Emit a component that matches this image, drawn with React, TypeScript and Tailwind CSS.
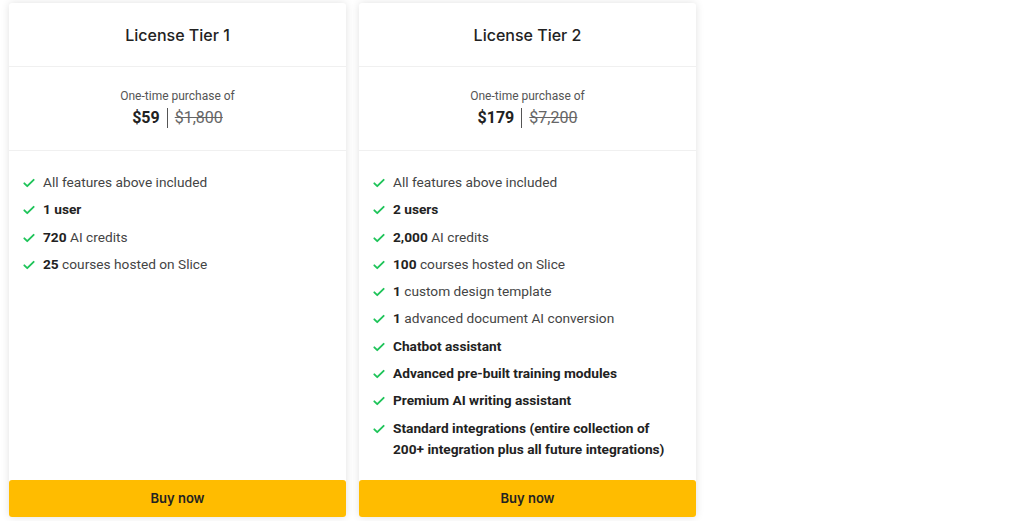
import React from 'react';

type Feature = { bold?: string; text?: string; allBold?: boolean };

const Check: React.FC = () => (
    <svg width="14" height="14" viewBox="0 0 24 24" fill="none" stroke="#1fc45a" strokeWidth="3.2" strokeLinecap="round" strokeLinejoin="round" className="mt-[4px] shrink-0">
        <path d="M4 12.5l5 5L20 6.5" />
    </svg>
);

const tiers: { title: string; price: string; old: string; features: Feature[] }[] = [
    {
        title: 'License Tier 1',
        price: '$59',
        old: '$1,800',
        features: [
            { text: 'All features above included' },
            { bold: '1 user', allBold: true },
            { bold: '720', text: ' AI credits' },
            { bold: '25', text: ' courses hosted on Slice' },
        ],
    },
    {
        title: 'License Tier 2',
        price: '$179',
        old: '$7,200',
        features: [
            { text: 'All features above included' },
            { bold: '2 users', allBold: true },
            { bold: '2,000', text: ' AI credits' },
            { bold: '100', text: ' courses hosted on Slice' },
            { bold: '1', text: ' custom design template' },
            { bold: '1', text: ' advanced document AI conversion' },
            { bold: 'Chatbot assistant', allBold: true },
            { bold: 'Advanced pre-built training modules', allBold: true },
            { bold: 'Premium AI writing assistant', allBold: true },
            { bold: 'Standard integrations (entire collection of 200+ integration plus all future integrations)', allBold: true },
        ],
    },
];

const App: React.FC = () => {
    return (
        <div className="h-[521px] overflow-hidden bg-white" style={{ fontFamily: 'Roboto, sans-serif' }}>
            <div className="flex gap-[13px] pl-[9px] pt-[3px] h-full">
                {tiers.map((t) => (
                    <div key={t.title} className="w-[337px] h-[514px] flex flex-col bg-white rounded-[3px] shadow-[0_0_8px_rgba(0,0,0,0.12)]">
                        <div className="h-[64px] flex items-center justify-center border-b border-[#f0f0f0]">
                            <h2 className="text-[16px] font-medium text-[#222]" style={{ fontFamily: 'Inter, sans-serif' }}>
                                {t.title}
                            </h2>
                        </div>
                        <div className="h-[84px] flex flex-col items-center justify-center border-b border-[#f0f0f0] pb-[2px]">
                            <p className="text-[12px] text-[#555] leading-[16px]">One-time purchase of</p>
                            <div className="flex items-center mt-[4px] text-[16px] leading-[20px]">
                                <span className="font-bold text-[#222]">{t.price}</span>
                                <span className="mx-[7px] w-px h-[20px] bg-[#555]" />
                                <span className="line-through text-[#666]">{t.old}</span>
                            </div>
                        </div>
                        <ul className="flex-1 px-[13px] pt-[21px] flex flex-col gap-[6.3px]">
                            {t.features.map((f, i) => (
                                <li key={i} className="flex gap-[7px] text-[13.7px] leading-[21px] text-[#444]">
                                    <Check />
                                    <span>
                                        {f.allBold ? (
                                            <b className="font-bold text-[#222]">{f.bold}</b>
                                        ) : (
                                            <>
                                                {f.bold && <b className="font-bold text-[#222]">{f.bold}</b>}
                                                {f.text}
                                            </>
                                        )}
                                    </span>
                                </li>
                            ))}
                        </ul>
                        <button className="h-[37px] w-full rounded-[3px] bg-[#ffbc00] pt-[1px] text-[13px] font-semibold text-[#222]" style={{ fontFamily: 'Inter, sans-serif' }}>
                            Buy now
                        </button>
                    </div>
                ))}
            </div>
        </div>
    );
};

export default App;
